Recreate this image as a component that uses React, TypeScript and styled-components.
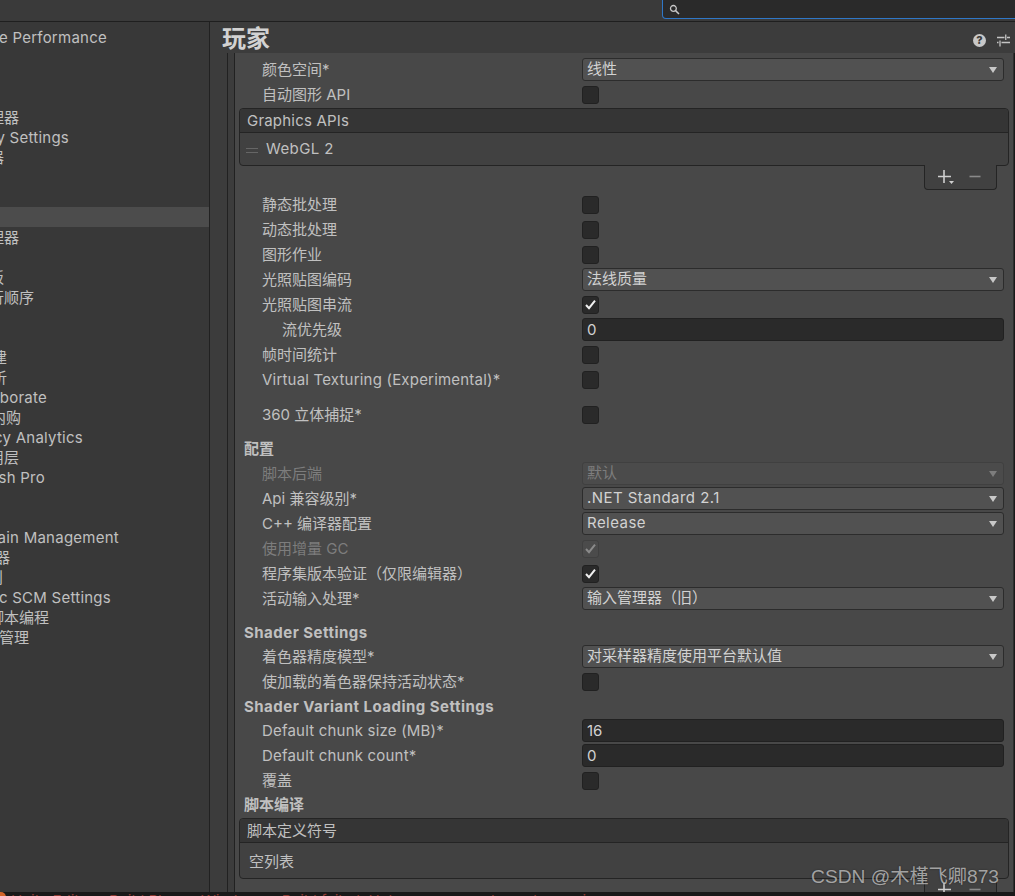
import React from 'react';
import styled, { createGlobalStyle } from 'styled-components';

const GlobalStyle = createGlobalStyle`
	html, body {
		margin: 0;
		padding: 0;
		background: #191919;
	}
	body {
		font-family: Inter, 'Noto Sans CJK SC', sans-serif;
		font-size: 15px;
		color: #c0c0c0;
	}
`;

type SideEntry = { text: string; end: number } | null;

const sideEntries: SideEntry[] = [
	{ text: 'Adaptive Performance', end: 107 },
	null,
	null,
	null,
	{ text: '包管理器', end: 19 },
	{ text: 'Memory Settings', end: 69 },
	{ text: '编辑器', end: 4 },
	null,
	null,
	null,
	{ text: '预设管理器', end: 19 },
	null,
	{ text: '模板', end: 4 },
	{ text: '脚本执行顺序', end: 34 },
	null,
	null,
	{ text: '构建', end: 7 },
	{ text: '分析', end: 7 },
	{ text: 'Collaborate', end: 47 },
	{ text: '内购', end: 21 },
	{ text: 'Legacy Analytics', end: 83 },
	{ text: '应用层', end: 19 },
	{ text: 'TextMesh Pro', end: 45 },
	null,
	null,
	{ text: 'Toolchain Management', end: 119 },
	{ text: '编辑器', end: 10 },
	{ text: '规则', end: 3 },
	{ text: 'Plastic SCM Settings', end: 111 },
	{ text: '可视化脚本编程', end: 49 },
	{ text: '版本管理', end: 29 },
];

const SELECTED_SIDE_ROW = 9;

const Check = () => (
	<svg width="13" height="13" viewBox="0 0 13 13">
		<path d="M2 7l3 3.2L11 2.6" fill="none" stroke="currentColor" strokeWidth="2" />
	</svg>
);

const PresetIcon = () => (
	<svg width="13" height="13" viewBox="0 0 13 13">
		<path
			d="M0 3.5h7.5M10 3.5h3M8.75 0.5v5.5M0 8.5h1.5M4.5 8.5h8.5M3 6.5v6"
			stroke="#c4c4c4"
			strokeWidth="1.3"
			fill="none"
		/>
	</svg>
);

const PlusIcon = () => (
	<svg width="20" height="18" viewBox="0 0 20 18">
		<path d="M7 2v13M1 8.5h13" stroke="#cfcfcf" strokeWidth="1.6" fill="none" />
		<path d="M12 13h5l-2.5 3z" fill="#cfcfcf" />
	</svg>
);

const MinusIcon = () => (
	<svg width="12" height="18" viewBox="0 0 12 18">
		<path d="M0.5 8.5h11" stroke="#8a8a8a" strokeWidth="1.6" fill="none" />
	</svg>
);

const SearchIcon = () => (
	<svg width="11" height="11" viewBox="0 0 11 11">
		<circle cx="4.4" cy="4.4" r="2.9" fill="none" stroke="#c8c8c8" strokeWidth="1.3" />
		<path d="M6.6 6.6l3.4 3.4" stroke="#c8c8c8" strokeWidth="1.5" fill="none" />
	</svg>
);

const App: React.FC = () => (
	<>
		<GlobalStyle />
		<Window>
			<TopBar>
				<SearchBox>
					<SearchIcon />
				</SearchBox>
			</TopBar>
			<Main>
				<Sidebar>
					{sideEntries.map((entry, i) => (
						<SideRow key={i} $selected={i === SELECTED_SIDE_ROW}>
							{entry && (
								<SideText $end={entry.end} $latin={/[a-z]/i.test(entry.text)}>
									{entry.text}
								</SideText>
							)}
						</SideRow>
					))}
				</Sidebar>
				<Pane>
					<PaneHeader>
						<Title>玩家</Title>
						<HeaderIcons>
							<HelpBadge>?</HelpBadge>
							<PresetIcon />
						</HeaderIcons>
					</PaneHeader>
					<PaneBody>
						<Gutter $width={18} />
						<Gutter $width={7} />
						<Inspector>
							<Row>
								<Label>颜色空间*</Label>
								<Dropdown>线性</Dropdown>
							</Row>
							<Row>
								<Label>自动图形 API</Label>
								<Checkbox />
							</Row>
							<List>
								<ListHead $latin>Graphics APIs</ListHead>
								<ListBody>
									<Handle />
									<LatinText>WebGL 2</LatinText>
								</ListBody>
							</List>
							<ListFooter>
								<PlusIcon />
								<MinusIcon />
							</ListFooter>
							<Spacer $height={2} />
							<Row>
								<Label>静态批处理</Label>
								<Checkbox />
							</Row>
							<Row>
								<Label>动态批处理</Label>
								<Checkbox />
							</Row>
							<Row>
								<Label>图形作业</Label>
								<Checkbox />
							</Row>
							<Row>
								<Label>光照贴图编码</Label>
								<Dropdown>法线质量</Dropdown>
							</Row>
							<Row>
								<Label>光照贴图串流</Label>
								<Checkbox>
									<Check />
								</Checkbox>
							</Row>
							<Row>
								<Label $indent>流优先级</Label>
								<Field>0</Field>
							</Row>
							<Row>
								<Label>帧时间统计</Label>
								<Checkbox />
							</Row>
							<Row>
								<Label $latin>Virtual Texturing (Experimental)*</Label>
								<Checkbox />
							</Row>
							<Spacer $height={10} />
							<Row>
								<Label>360 立体捕捉*</Label>
								<Checkbox />
							</Row>
							<Spacer $height={10} />
							<SectionTitle>配置</SectionTitle>
							<Row>
								<Label $dim>脚本后端</Label>
								<Dropdown $dim>默认</Dropdown>
							</Row>
							<Row>
								<Label>Api 兼容级别*</Label>
								<Dropdown $latin>.NET Standard 2.1</Dropdown>
							</Row>
							<Row>
								<Label>C++ 编译器配置</Label>
								<Dropdown $latin>Release</Dropdown>
							</Row>
							<Row>
								<Label $dim>使用增量 GC</Label>
								<Checkbox $dim>
									<Check />
								</Checkbox>
							</Row>
							<Row>
								<Label>程序集版本验证（仅限编辑器）</Label>
								<Checkbox>
									<Check />
								</Checkbox>
							</Row>
							<Row>
								<Label>活动输入处理*</Label>
								<Dropdown>输入管理器（旧）</Dropdown>
							</Row>
							<Spacer $height={9} />
							<SectionTitle $latin>Shader Settings</SectionTitle>
							<Row>
								<Label>着色器精度模型*</Label>
								<Dropdown>对采样器精度使用平台默认值</Dropdown>
							</Row>
							<Row>
								<Label>使加载的着色器保持活动状态*</Label>
								<Checkbox />
							</Row>
							<SectionTitle $latin>Shader Variant Loading Settings</SectionTitle>
							<Row>
								<Label $latin>Default chunk size (MB)*</Label>
								<Field>16</Field>
							</Row>
							<Row>
								<Label $latin>Default chunk count*</Label>
								<Field>0</Field>
							</Row>
							<Row>
								<Label>覆盖</Label>
								<Checkbox />
							</Row>
							<SectionTitle>脚本编译</SectionTitle>
							<List>
								<ListHead>脚本定义符号</ListHead>
								<ListBody $tall>空列表</ListBody>
							</List>
							<ListFooter>
								<PlusIcon />
								<MinusIcon />
							</ListFooter>
						</Inspector>
					</PaneBody>
				</Pane>
			</Main>
			<StatusBar>
				<StatusDot />
				<StatusText>Unity Editor - Build Player: Windows - Build failed: Unknown error, please try again</StatusText>
			</StatusBar>
			<Watermark>CSDN @木槿飞卿873</Watermark>
		</Window>
	</>
);

export default App;

/**
 * Styled components
 */

const Window = styled.div`
	position: relative;
	display: flex;
	flex-direction: column;
	width: 1015px;
	height: 896px;
	overflow: hidden;
`;

const TopBar = styled.div`
	display: flex;
	justify-content: flex-end;
	align-items: flex-start;
	flex: none;
	height: 21px;
	overflow: hidden;
	background: #3a3a3a;
	border-bottom: 1px solid #1f1f1f;
`;

const SearchBox = styled.div`
	display: flex;
	align-items: center;
	flex: none;
	box-sizing: border-box;
	width: 363px;
	height: 19px;
	margin-right: -10px;
	padding-left: 6px;
	background: #2a2a2a;
	border: 1px solid #2f77c7;
	border-top: none;
	border-radius: 0 0 4px 4px;
`;

const Main = styled.div`
	display: flex;
	flex: 1;
	min-height: 0;
`;

const Sidebar = styled.div`
	flex: none;
	box-sizing: border-box;
	width: 210px;
	padding-top: 5px;
	overflow: hidden;
	background: #383838;
	border-right: 1px solid #212121;
`;

const SideRow = styled.div<{ $selected?: boolean }>`
	height: 20px;
	line-height: 22px;
	background: ${p => (p.$selected ? '#4c4c4c' : 'transparent')};
`;

const SideText = styled.div<{ $end: number; $latin?: boolean }>`
	display: flex;
	justify-content: flex-end;
	width: ${p => p.$end}px;
	letter-spacing: ${p => (p.$latin ? 0.25 : 0)}px;
	white-space: nowrap;
`;

const Pane = styled.div`
	display: flex;
	flex-direction: column;
	flex: 1;
	min-width: 0;
`;

const PaneHeader = styled.div`
	display: flex;
	align-items: center;
	justify-content: space-between;
	flex: none;
	height: 31px;
	padding: 0 5px 0 12px;
	background: #3c3c3c;
`;

const Title = styled.div`
	margin-top: -2px;
	font-size: 24px;
	font-weight: 700;
	color: #d2d2d2;
`;

const HeaderIcons = styled.div`
	display: flex;
	align-items: center;
	gap: 11px;
	margin-top: 5px;
`;

const HelpBadge = styled.div`
	width: 13px;
	height: 13px;
	border-radius: 50%;
	background: #c8c8c8;
	color: #3c3c3c;
	font-size: 11px;
	font-weight: 800;
	line-height: 13px;
	text-align: center;
`;

const PaneBody = styled.div`
	display: flex;
	flex: 1;
	min-height: 0;
	overflow: hidden;
`;

const Gutter = styled.div<{ $width: number }>`
	flex: none;
	box-sizing: border-box;
	width: ${p => p.$width}px;
	background: #3c3c3c;
	border-right: 1px solid #212121;
`;

const Inspector = styled.div`
	flex: none;
	box-sizing: border-box;
	width: 779px;
	padding-top: 4px;
	background: #484848;
	border-right: 1px solid #2e2e2e;
`;

const Row = styled.div`
	display: flex;
	align-items: center;
	box-sizing: border-box;
	height: 25px;
	padding: 0 9px 0 27px;
`;

const Label = styled.div<{ $indent?: boolean; $dim?: boolean; $latin?: boolean }>`
	flex: none;
	box-sizing: border-box;
	width: 320px;
	padding-left: ${p => (p.$indent ? 20 : 0)}px;
	padding-bottom: ${p => (p.$latin ? 0 : 3)}px;
	letter-spacing: ${p => (p.$latin ? 0.2 : 0)}px;
	color: ${p => (p.$dim ? '#7d7d7d' : '#c0c0c0')};
	white-space: nowrap;
`;

const LatinText = styled.span`
	margin-top: -2px;
	letter-spacing: 0.4px;
`;

const Dropdown = styled.div<{ $dim?: boolean; $latin?: boolean }>`
	position: relative;
	flex: 1;
	box-sizing: border-box;
	height: 23px;
	padding-left: 4px;
	line-height: 20px;
	letter-spacing: ${p => (p.$latin ? 0.45 : 0)}px;
	background: ${p => (p.$dim ? '#4b4b4b' : '#515151')};
	border: 1px solid ${p => (p.$dim ? '#404040' : '#2c2c2c')};
	border-radius: 3px;
	color: ${p => (p.$dim ? '#7d7d7d' : '#d2d2d2')};

	&::after {
		content: '';
		position: absolute;
		top: 8px;
		right: 6px;
		border-left: 4.5px solid transparent;
		border-right: 4.5px solid transparent;
		border-top: 6px solid ${p => (p.$dim ? '#7d7d7d' : '#c8c8c8')};
	}
`;

const Field = styled.div`
	flex: 1;
	box-sizing: border-box;
	height: 23px;
	padding-left: 4px;
	line-height: 21px;
	background: #2a2a2a;
	border: 1px solid #212121;
	border-radius: 3px;
	color: #d2d2d2;
`;

const Checkbox = styled.div<{ $dim?: boolean }>`
	display: flex;
	align-items: center;
	justify-content: center;
	flex: none;
	box-sizing: border-box;
	width: 17px;
	height: 18px;
	background: ${p => (p.$dim ? '#4b4b4b' : '#2a2a2a')};
	border: 1px solid ${p => (p.$dim ? '#404040' : '#212121')};
	border-radius: 3px;
	color: ${p => (p.$dim ? '#8a8a8a' : '#f0f0f0')};
`;

const SectionTitle = styled.div<{ $latin?: boolean }>`
	box-sizing: border-box;
	height: 24px;
	padding-left: 9px;
	line-height: ${p => (p.$latin ? 26 : 24)}px;
	letter-spacing: ${p => (p.$latin ? 0.48 : 0)}px;
	font-weight: 700;
	color: #c0c0c0;
`;

const Spacer = styled.div<{ $height: number }>`
	height: ${p => p.$height}px;
`;

const List = styled.div`
	box-sizing: border-box;
	width: 770px;
	margin: 1px 0 0 4px;
	background: #414141;
	border: 1px solid #242424;
	border-radius: 4px;
`;

const ListHead = styled.div<{ $latin?: boolean }>`
	box-sizing: border-box;
	height: 24px;
	padding-left: 7px;
	line-height: 23px;
	letter-spacing: ${p => (p.$latin ? 0.2 : 0)}px;
	background: #353535;
	border-bottom: 1px solid #242424;
	border-radius: 4px 4px 0 0;
`;

const ListBody = styled.div<{ $tall?: boolean }>`
	display: flex;
	align-items: center;
	gap: 8px;
	height: ${p => (p.$tall ? 35 : 32)}px;
	padding-left: ${p => (p.$tall ? 9 : 6)}px;
`;

const Handle = styled.div`
	width: 12px;
	height: 3px;
	margin-top: 3px;
	border-top: 1px solid #666666;
	border-bottom: 1px solid #666666;
`;

const ListFooter = styled.div`
	display: flex;
	align-items: center;
	gap: 12px;
	box-sizing: border-box;
	width: 73px;
	height: 25px;
	margin: -1px 0 0 689px;
	padding: 0 0 0 12px;
	background: #414141;
	border: 1px solid #242424;
	border-top: none;
	border-radius: 0 0 4px 4px;
`;

const StatusBar = styled.div`
	display: flex;
	flex: none;
	gap: 3px;
	height: 4px;
	overflow: hidden;
	background: #191919;
`;

const StatusDot = styled.div`
	flex: none;
	width: 10px;
	height: 10px;
	margin-left: -4px;
	border-radius: 50%;
	background: #d2642a;
`;

const StatusText = styled.div`
	margin-left: 2px;
	line-height: 17px;
	font-size: 15px;
	color: #8f3a33;
	white-space: nowrap;
`;

const Watermark = styled.div`
	position: absolute;
	right: 16px;
	bottom: 7px;
	font-family: 'Liberation Sans', 'Noto Sans CJK SC', sans-serif;
	font-size: 19.2px;
	color: rgba(214, 214, 214, 0.7);
	text-shadow: 0 0 2px rgba(0, 0, 0, 0.4);
	white-space: nowrap;
`;
